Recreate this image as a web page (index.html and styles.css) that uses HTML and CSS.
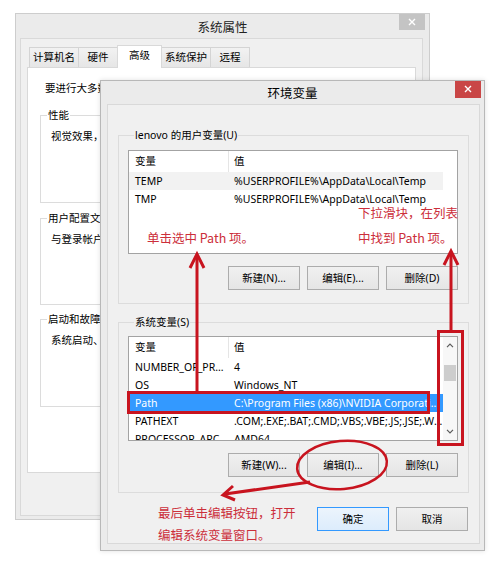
FILE: index.html
```html
<!DOCTYPE html>
<html lang="zh-CN">
<head>
<meta charset="utf-8">
<title>环境变量</title>
<link rel="stylesheet" href="styles.css">
</head>
<body>
<div class="desk">

  <div class="win back">
    <div class="titlebar">
      <span class="caption">系统属性</span>
      <span class="close close-idle"><svg width="8" height="8" viewBox="0 0 8 8"><path d="M1 1L7 7M7 1L1 7" stroke="#fff" stroke-width="1.4"/></svg></span>
    </div>
    <div class="client">
      <div class="tabs">
        <span class="tab">计算机名</span>
        <span class="tab">硬件</span>
        <span class="tab active">高级</span>
        <span class="tab">系统保护</span>
        <span class="tab">远程</span>
      </div>
      <div class="tabpanel">
        <p class="hint">要进行大多数更改，你必须作为管理员登录。</p>
        <div class="box">
          <div class="legend">性能</div>
          <p class="box-text">视觉效果，处理器计划，内存使用，以及虚拟内存</p>
        </div>
        <div class="box box-2">
          <div class="legend">用户配置文件</div>
          <p class="box-text">与登录帐户相关的桌面设置</p>
        </div>
        <div class="box box-3">
          <div class="legend">启动和故障恢复</div>
          <p class="box-text">系统启动、系统故障和调试信息</p>
        </div>
      </div>
    </div>
  </div>

  <div class="win front">
    <div class="titlebar">
      <span class="caption">环境变量</span>
      <span class="close close-red"><svg width="8" height="8" viewBox="0 0 8 8"><path d="M1 1L7 7M7 1L1 7" stroke="#fff" stroke-width="1.4"/></svg></span>
    </div>
    <div class="client client-env">

      <div class="group group-user">
        <div class="legend">lenovo 的用户变量(U)</div>
        <div class="lv lv-user">
          <div class="lv-main">
            <div class="lv-head"><span class="c1">变量</span><span class="c2">值</span></div>
            <div class="lv-row hot"><span class="c1">TEMP</span><span class="c2">%USERPROFILE%\AppData\Local\Temp</span></div>
            <div class="lv-row"><span class="c1">TMP</span><span class="c2">%USERPROFILE%\AppData\Local\Temp</span></div>
          </div>
        </div>
        <div class="btns">
          <span class="btn">新建(N)...</span>
          <span class="btn">编辑(E)...</span>
          <span class="btn">删除(D)</span>
        </div>
      </div>

      <div class="group group-sys">
        <div class="legend">系统变量(S)</div>
        <div class="lv lv-sys">
          <div class="lv-main">
            <div class="lv-head"><span class="c1">变量</span><span class="c2">值</span></div>
            <div class="lv-row"><span class="c1">NUMBER_OF_PROCESSORS</span><span class="c2">4</span></div>
            <div class="lv-row"><span class="c1">OS</span><span class="c2">Windows_NT</span></div>
            <div class="lv-row selected"><span class="c1">Path</span><span class="c2">C:\Program Files (x86)\NVIDIA Corporation\PhysX\Common</span></div>
            <div class="lv-row"><span class="c1">PATHEXT</span><span class="c2">.COM;.EXE;.BAT;.CMD;.VBS;.VBE;.JS;.JSE;.WSF;.WSH</span></div>
            <div class="lv-row"><span class="c1">PROCESSOR_ARCHITECTURE</span><span class="c2">AMD64</span></div>
          </div>
          <div class="vscroll">
            <span class="arrow"><svg width="8" height="5" viewBox="0 0 8 5"><path d="M1 4.2L4 1.2L7 4.2" fill="none" stroke="#5a5a5a" stroke-width="1.2"/></svg></span>
            <span class="track"><span class="thumb"></span></span>
            <span class="arrow"><svg width="8" height="5" viewBox="0 0 8 5"><path d="M1 0.8L4 3.8L7 0.8" fill="none" stroke="#5a5a5a" stroke-width="1.2"/></svg></span>
          </div>
        </div>
        <div class="btns">
          <span class="btn">新建(W)...</span>
          <span class="btn">编辑(I)...</span>
          <span class="btn">删除(L)</span>
        </div>
      </div>

      <div class="btns footer">
        <span class="btn default">确定</span>
        <span class="btn">取消</span>
      </div>
    </div>
  </div>

  <!-- red annotations drawn over the screenshot -->
  <svg class="marks" width="500" height="563" viewBox="0 0 500 563">
    <g fill="none" stroke="#c8141f" stroke-width="3">
      <rect x="128.5" y="392.5" width="300" height="20"/>
      <rect x="438.5" y="331.5" width="24" height="113"/>
      <path d="M197 391V256"/>
      <path d="M190 268L197 254L204 268"/>
      <path d="M451 331V252"/>
      <path d="M444 265L451 251L458 265"/>
      <path d="M310 482L225 494"/>
      <path d="M233 486L223 495L235 500"/>
    </g>
    <ellipse cx="342" cy="465" rx="45" ry="24" transform="rotate(-5 342 465)" fill="none" stroke="#c8141f" stroke-width="2.5"/>
  </svg>

  <div class="tip tip-click">单击选中 Path 项。</div>
  <div class="tip tip-scroll">下拉滑块，在列表<br>中找到 Path 项。</div>
  <div class="tip tip-edit">最后单击编辑按钮，打开<br>编辑系统变量窗口。</div>

</div>
</body>
</html>
```

FILE: styles.css
```css
* {
  box-sizing: border-box;
}

body {
  margin: 0;
  background: #ffffff;
  color: #000000;
  font-family: "Noto Sans", "Noto Sans CJK SC", sans-serif;
  font-size: 10.5px;
}

p {
  margin: 0;
}

.desk {
  position: relative;
  width: 500px;
  height: 563px;
  overflow: hidden;
}

/* windows */

.win {
  position: absolute;
  display: flex;
  flex-direction: column;
  background: #ebebeb;
  border: 1px solid #cdcdcd;
  overflow: hidden;
}

.back {
  left: 15px;
  top: 13px;
  width: 415px;
  height: 507px;
}

.front {
  left: 100px;
  top: 80px;
  width: 385px;
  height: 471px;
  border-color: #b8b8b8;
  box-shadow: 0 0 5px rgba(0,0,0,0.12);
}

.titlebar {
  position: relative;
  flex: none;
  height: 24px;
  display: flex;
  align-items: center;
  justify-content: center;
  font-size: 12.5px;
  color: #222;
}

.front .titlebar {
  height: 23px;
  color: #000;
}

.close {
  position: absolute;
  top: -1px;
  right: 4px;
  width: 26px;
  height: 17px;
  display: flex;
  align-items: center;
  justify-content: center;
}

.close-idle {
  background: #c4c4c4;
}

.close-red {
  right: 3px;
  height: 18px;
  background: #c94646;
}

.client {
  flex: 1;
  margin: 0 6px 3px 4px;
  padding: 8px 6px 0 6px;
  background: #f0f0f0;
  border: 1px solid #d9d9d9;
}

/* tabs of the back window */

.tabs {
  display: flex;
  height: 20px;
  margin-left: 2px;
}

.tab {
  position: relative;
  min-width: 40px;
  height: 20px;
  padding: 0 3px;
  margin-right: -1px;
  text-align: center;
  line-height: 19px;
  background: linear-gradient(#f2f2f2, #e6e6e6);
  border: 1px solid #d4d4d4;
  border-bottom: none;
}

.tab.active {
  z-index: 1;
  height: 23px;
  margin-top: -2px;
  padding: 0 11px;
  line-height: 19px;
  background: #ffffff;
  border-color: #d9d9d9;
}

.tabpanel {
  height: 406px;
  padding: 0 12px;
  background: #ffffff;
  border: 1px solid #d9d9d9;
}

.hint {
  margin: 13px 0 0 5px;
  line-height: 14px;
  white-space: nowrap;
}

.box {
  height: 88px;
  margin-top: 20px;
  border: 1px solid #dcdcdc;
}

.box-2 {
  height: 87px;
  margin-top: 15px;
}

.box-3 {
  margin-top: 14px;
}

.legend {
  display: table;
  margin: -8px 0 0 6px;
  padding: 0 1px;
  line-height: 14px;
  background: #ffffff;
  white-space: nowrap;
}

.box-text {
  margin: 7px 0 0 10px;
  line-height: 14px;
  white-space: nowrap;
}

/* environment variables window */

.client-env {
  margin: 0 4px 6px 6px;
  padding: 0 10px;
}

.group {
  border: 1px solid #dcdcdc;
  padding: 0 10px 0 9px;
}

.group .legend {
  background: #f0f0f0;
}

.group-user {
  height: 169px;
  margin-top: 30px;
}

.group-sys {
  height: 171px;
  margin-top: 18px;
}

.lv {
  display: flex;
  width: 330px;
  margin-top: 8px;
  height: 104px;
  background: #ffffff;
  border: 1px solid #a3a3a3;
  overflow: hidden;
}

.lv-sys {
  margin-top: 7px;
  height: 105px;
}

.lv-main {
  flex: none;
  width: 314px;
}

.lv-head {
  display: flex;
  height: 21px;
  line-height: 21px;
}

.lv-head .c1 {
  border-right: 1px solid #e5e5e5;
}

.lv-row {
  display: flex;
  height: 18px;
  line-height: 18px;
}

.lv-row.hot {
  background: #f2f2f2;
}

.lv-row.selected {
  background: #3399ff;
  color: #ffffff;
}

.c1 {
  flex: none;
  width: 100px;
  padding-left: 6px;
  white-space: nowrap;
  overflow: hidden;
  text-overflow: ellipsis;
}

.c2 {
  flex: 1;
  min-width: 0;
  padding-left: 5px;
  white-space: nowrap;
  overflow: hidden;
  text-overflow: ellipsis;
}

.vscroll {
  flex: 1;
  display: flex;
  flex-direction: column;
  background: #f7f7f7;
}

.arrow {
  flex: none;
  height: 17px;
  display: flex;
  align-items: center;
  justify-content: center;
}

.track {
  flex: 1;
  padding: 11px 1px 0;
}

.thumb {
  display: block;
  height: 16px;
  background: #cdcdcd;
}

.btns {
  display: flex;
  justify-content: flex-end;
  gap: 7px;
  margin-top: 12px;
}

.footer {
  margin-top: 14px;
  margin-right: 1px;
}

.btn {
  width: 72px;
  height: 24px;
  line-height: 22px;
  text-align: center;
  background: linear-gradient(#f0f0f0, #e5e5e5);
  border: 1px solid #acacac;
}

.btn.default {
  background: linear-gradient(#ecf4fc, #dcecfc);
  border-color: #3399ff;
}

/* red notes */

.marks {
  position: absolute;
  left: 0;
  top: 0;
  pointer-events: none;
}

.tip {
  position: absolute;
  color: #cc2e3a;
  font-family: "Noto Sans CJK SC", sans-serif;
  font-size: 12.5px;
  white-space: nowrap;
}

.tip-click {
  left: 147px;
  top: 227px;
  line-height: 22px;
}

.tip-scroll {
  left: 358px;
  top: 200px;
  line-height: 25px;
}

.tip-edit {
  left: 158px;
  top: 502px;
  line-height: 22px;
}
```
